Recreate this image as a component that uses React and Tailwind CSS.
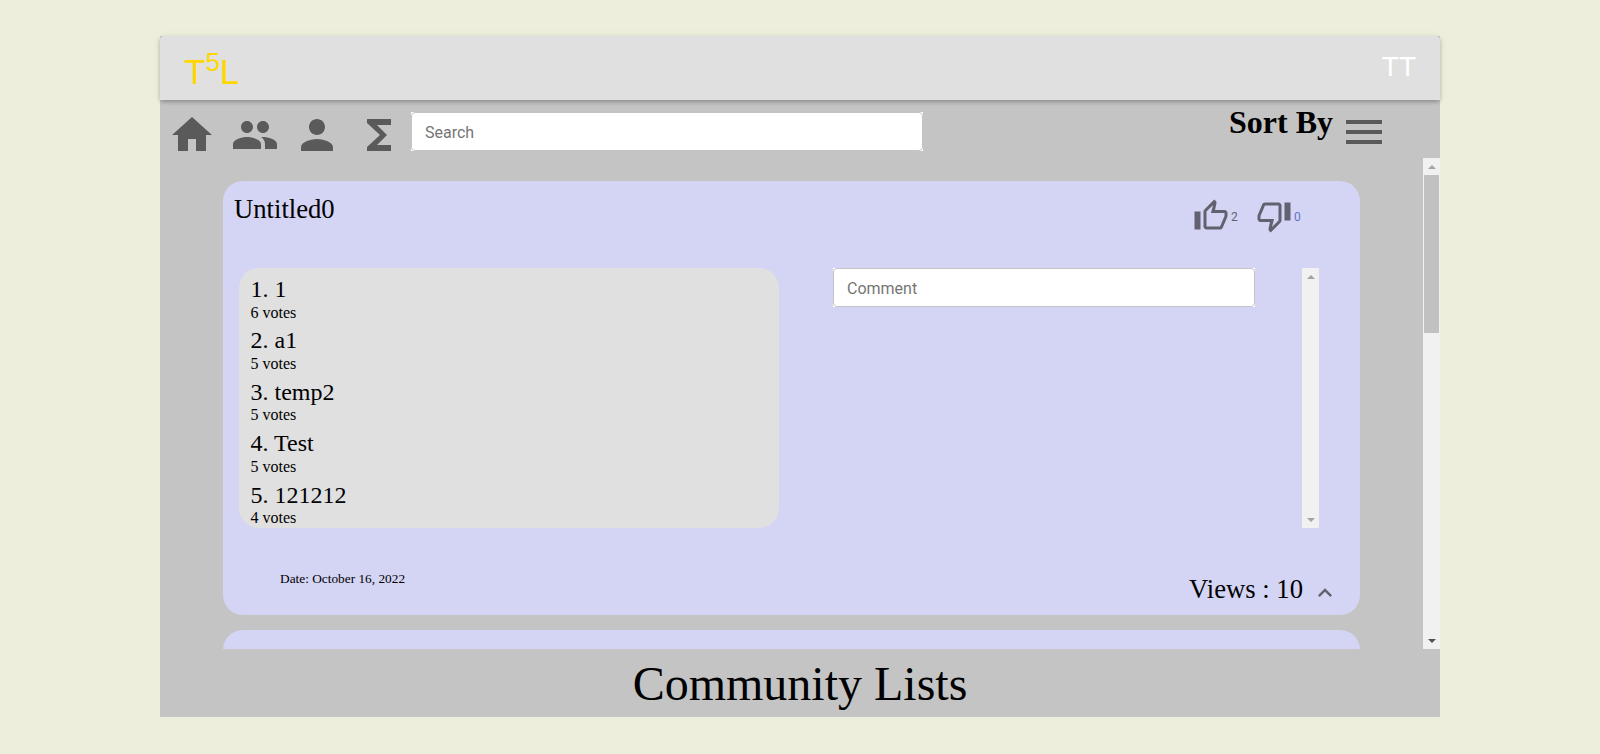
const serif = "font-['Liberation_Serif',serif]";

function Icon({ d, className }) {
  return (
    <svg viewBox="0 0 24 24" className={"fill-current shrink-0 " + className}>
      <path d={d} />
    </svg>
  );
}

const icons = {
  home: "M10 20v-6h4v6h5v-8h3L12 3 2 12h3v8z",
  people:
    "M16 11c1.66 0 2.99-1.34 2.99-3S17.66 5 16 5c-1.66 0-3 1.34-3 3s1.34 3 3 3zm-8 0c1.66 0 2.99-1.34 2.99-3S9.66 5 8 5C6.34 5 5 6.34 5 8s1.34 3 3 3zm0 2c-2.33 0-7 1.17-7 3.5V19h14v-2.5c0-2.33-4.67-3.5-7-3.5zm8 0c-.29 0-.62.02-.97.05 1.16.84 1.97 1.97 1.97 3.45V19h6v-2.5c0-2.33-4.67-3.5-7-3.5z",
  person:
    "M12 12c2.21 0 4-1.79 4-4s-1.79-4-4-4-4 1.79-4 4 1.79 4 4 4zm0 2c-2.67 0-8 1.34-8 4v2h16v-2c0-2.66-5.33-4-8-4z",
  sigma: "M18 4H6v2l6.5 6L6 18v2h12v-3h-7l5-5-5-5h7z",
  menu: "M3 18h18v-2H3v2zm0-5h18v-2H3v2zm0-7v2h18V6H3z",
  up: "M9 21h9c.83 0 1.54-.5 1.84-1.22l3.02-7.05c.09-.23.14-.47.14-.73v-2c0-1.1-.9-2-2-2h-6.31l.95-4.57.03-.32c0-.41-.17-.79-.44-1.06L14.17 1 7.58 7.59C7.22 7.95 7 8.45 7 9v10c0 1.1.9 2 2 2zM9 9l4.34-4.34L12 10h9v2l-3 7H9V9zM1 9h4v12H1z",
  down: "M15 3H6c-.83 0-1.54.5-1.84 1.22l-3.02 7.05c-.09.23-.14.47-.14.73v2c0 1.1.9 2 2 2h6.31l-.95 4.57-.03.32c0 .41.17.79.44 1.06L9.83 23l6.59-6.59c.36-.36.58-.86.58-1.41V5c0-1.1-.9-2-2-2zm0 12l-4.34 4.34L12 14H3v-2l3-7h9v10zm4-12h4v12h-4z",
  less: "M12 8l-6 6 1.41 1.41L12 10.83l4.59 4.58L18 14z",
};

const items = [
  ["1. 1", "6 votes"],
  ["2. a1", "5 votes"],
  ["3. temp2", "5 votes"],
  ["4. Test", "5 votes"],
  ["5. 121212", "4 votes"],
];

function Arrow({ dir, className }) {
  return (
    <div className="h-[17px] flex items-center justify-center shrink-0">
      <svg viewBox="0 0 8 4" className={"w-2 h-1 fill-current " + className}>
        <path d={dir === "up" ? "M4 0l4 4H0z" : "M0 0h8L4 4z"} />
      </svg>
    </div>
  );
}

function TextBox({ placeholder, className }) {
  return (
    <div className={"bg-white " + className}>
      <input
        placeholder={placeholder}
        className="w-full h-full px-[13px] pt-[2px] border rounded-[4px] border-[#c4c4c4] text-base font-['Roboto',sans-serif] outline-none placeholder:text-[#757575]"
      />
    </div>
  );
}

function Card() {
  return (
    <div className={"ml-[63px] mt-[23px] w-[1137px] h-[434px] shrink-0 rounded-[20px] bg-[#d4d4f4] flex flex-col " + serif}>
      <div className="h-[87px] flex justify-between shrink-0">
        <div className="pl-[11px] pt-[13px] text-[26.67px] leading-[30px] text-black">Untitled0</div>
        <div className="flex pt-[17px] pr-[54px] text-[12px] font-['Roboto',sans-serif]">
          <Icon d={icons.up} className="w-9 h-9 text-black/54" />
          <span className="mt-[10px] ml-[2px] w-[25px] text-[#61616f]">2</span>
          <Icon d={icons.down} className="w-9 h-9 text-black/54" />
          <span className="mt-[10px] ml-[2px] w-[12px] text-[#5f72c8]">0</span>
        </div>
      </div>

      <div className="h-[260px] flex shrink-0">
        <div className="ml-4 w-[540px] rounded-[20px] bg-[#e0e0e0] overflow-hidden pl-[11.5px] pt-[8px]">
          {items.map(([name, votes]) => (
            <div key={name} className="mb-[5.8px] text-black">
              <div className="text-2xl leading-[27.6px]">{name}</div>
              <div className="text-base leading-[18px]">{votes}</div>
            </div>
          ))}
        </div>
        <div className="ml-[54px] w-[486px] flex justify-between">
          <TextBox placeholder="Comment" className="w-[422px] h-[39px]" />
          <div className="w-[17px] h-full bg-[#f1f1f1] flex flex-col justify-between text-[#a3a3a3]">
            <Arrow dir="up" />
            <Arrow dir="down" />
          </div>
        </div>
      </div>

      <div className="flex-1 flex justify-between">
        <div className="pl-[57px] pt-[43px] text-[13.33px] leading-[15px] text-black">Date: October 16, 2022</div>
        <div className="flex items-start pt-[46px] pr-[21px]">
          <span className="text-[26.67px] leading-[30px] text-black">Views : 10</span>
          <Icon d={icons.less} className="w-7 h-7 ml-[8px] mt-[5px] text-black/54" />
        </div>
      </div>
    </div>
  );
}

export default function App() {
  return (
    <div className="min-h-[754px] bg-[#eeeedd] pt-9">
      <div className="mx-auto w-[1280px] h-[681px] bg-[#c4c4c4] flex flex-col">
        <header className="h-16 shrink-0 bg-[#e0e0e0] rounded-t-[4px] shadow-[0_2px_4px_-1px_rgba(0,0,0,0.2),0_2px_4px_0_rgba(0,0,0,0.1),0_1px_8px_0_rgba(0,0,0,0.08)] flex items-start justify-between pl-6 pr-6 font-['Liberation_Sans',sans-serif] relative z-10">
          <div className="pt-[16px] text-[35px] leading-[40px] text-[#ffd700]">
            T<sup className="text-[26px]">5</sup>L
          </div>
          <div className="pt-[15px] text-[28px] leading-[32px] text-white">TT</div>
        </header>

        <div className="h-[58px] shrink-0 flex items-start text-black/54">
          <Icon d={icons.home} className="w-12 h-12 ml-2 mt-[11px]" />
          <Icon d={icons.people} className="w-12 h-12 ml-[15px] mt-[11px]" />
          <Icon d={icons.person} className="w-12 h-12 ml-[14px] mt-[11px]" />
          <Icon d={icons.sigma} className="w-12 h-12 ml-[14px] mt-[11px]" />
          <TextBox placeholder="Search" className="w-[512px] h-[39px] ml-2 mt-3" />
          <div className={"ml-[306px] mt-[4px] font-bold text-[32px] leading-[37px] text-black " + serif}>Sort By</div>
          <Icon d={icons.menu} className="w-12 h-12 ml-[7px] mt-2" />
        </div>

        <div className="h-[491px] shrink-0 flex">
          <div className="flex-1 overflow-hidden flex flex-col">
            <Card />
            <div className="ml-[63px] mt-[15px] w-[1137px] h-[434px] shrink-0 rounded-[20px] bg-[#d4d4f4]" />
          </div>
          <div className="w-[17px] bg-[#f1f1f1] flex flex-col">
            <Arrow dir="up" className="text-[#a3a3a3]" />
            <div className="mx-[1px] h-[158px] bg-[#c1c1c1]" />
            <div className="flex-1" />
            <Arrow dir="down" className="text-[#505050]" />
          </div>
        </div>

        <div className={"flex-1 text-center text-5xl leading-[55px] pt-[7px] text-black " + serif}>Community Lists</div>
      </div>
    </div>
  );
}
